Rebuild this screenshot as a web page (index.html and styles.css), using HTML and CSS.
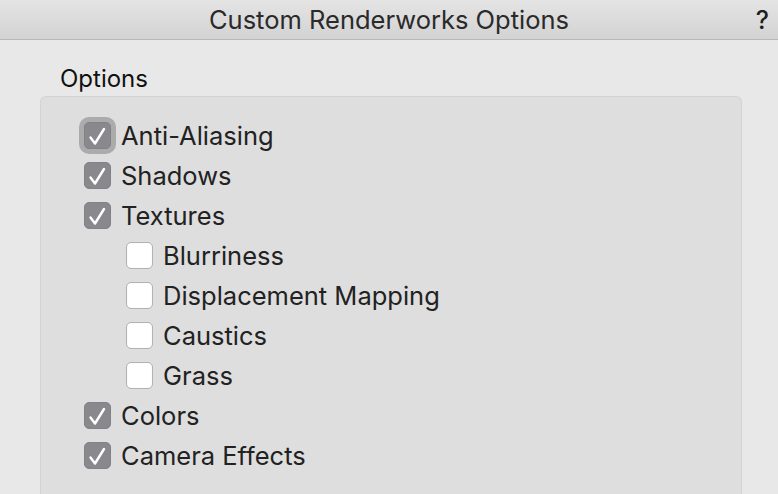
FILE: index.html
```html
<!DOCTYPE html>
<html>
<head>
<meta charset="utf-8">
<link rel="stylesheet" href="styles.css">
</head>
<body>
<div class="titlebar">
  <div></div>
  <div class="title">Custom Renderworks Options</div>
  <div class="help">?</div>
</div>
<div class="content">
  <div class="group-label">Options</div>
  <div class="panel">
    <label class="row"><span class="box checked focus"><svg viewBox="0 0 27 27"><polyline points="6.5,15.5 11,21.5 20,7"/></svg></span><span class="text">Anti-Aliasing</span></label>
    <label class="row"><span class="box checked"><svg viewBox="0 0 27 27"><polyline points="6.5,15.5 11,21.5 20,7"/></svg></span><span class="text">Shadows</span></label>
    <label class="row"><span class="box checked"><svg viewBox="0 0 27 27"><polyline points="6.5,15.5 11,21.5 20,7"/></svg></span><span class="text">Textures</span></label>
    <label class="row sub"><span class="box"></span><span class="text">Blurriness</span></label>
    <label class="row sub"><span class="box"></span><span class="text">Displacement Mapping</span></label>
    <label class="row sub"><span class="box"></span><span class="text">Caustics</span></label>
    <label class="row sub"><span class="box"></span><span class="text">Grass</span></label>
    <label class="row"><span class="box checked"><svg viewBox="0 0 27 27"><polyline points="6.5,15.5 11,21.5 20,7"/></svg></span><span class="text">Colors</span></label>
    <label class="row"><span class="box checked"><svg viewBox="0 0 27 27"><polyline points="6.5,15.5 11,21.5 20,7"/></svg></span><span class="text">Camera Effects</span></label>
  </div>
</div>
</body>
</html>
```

FILE: styles.css
```css
html, body {
  margin: 0;
  padding: 0;
  height: 100%;
  overflow: hidden;
}
body {
  background: #e8e8e8;
  font-family: Inter, "Liberation Sans", sans-serif;
  color: #222;
}
.titlebar {
  height: 39px;
  border-bottom: 1px solid #b8b8b8;
  background: linear-gradient(#e4e4e4, #d3d3d3);
  display: grid;
  grid-template-columns: 1fr auto 1fr;
  align-items: center;
}
.title {
  font-size: 25.5px;
  color: #2a2a2a;
}
.help {
  justify-self: end;
  padding-right: 9px;
  font-size: 25px;
  font-weight: 500;
  color: #1e1e1e;
}
.content {
  padding: 24px 36px 0 40px;
}
.group-label {
  font-size: 24px;
  margin-left: 20px;
  height: 32px;
  color: #111;
}
.panel {
  background: #dedede;
  border: 1px solid #d3d3d3;
  border-bottom: none;
  border-radius: 6px 6px 0 0;
  padding: 18px 0 40px 43px;
}
.row {
  display: flex;
  align-items: center;
  height: 40px;
  font-size: 25.5px;
}
.row.sub {
  padding-left: 42px;
}
.box {
  width: 27px;
  height: 27px;
  box-sizing: border-box;
  border-radius: 5px;
  background: #fff;
  border: 1px solid #b2b2b2;
  box-shadow: inset 0 0 1px rgba(0,0,0,0.15);
  margin-right: 10px;
  flex: none;
  display: flex;
}
.box.checked {
  background: #89888d;
  border-color: #828186;
  box-shadow: none;
}
.box.focus {
  box-shadow: 0 0 0 5px #ababab;
}
.box svg {
  width: 27px;
  height: 27px;
  margin: -1px;
}
.box polyline {
  fill: none;
  stroke: #fff;
  stroke-width: 2.4;
  stroke-linecap: round;
  stroke-linejoin: round;
}
```
